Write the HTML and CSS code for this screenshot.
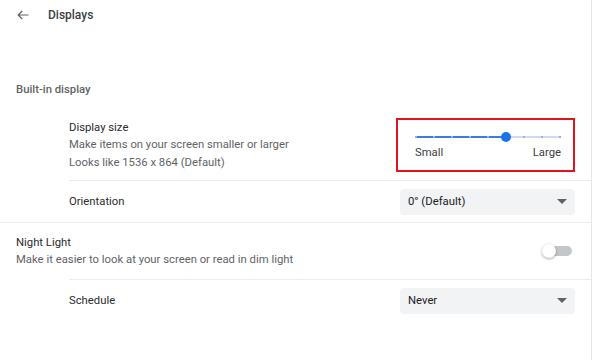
FILE: index.html
```html
<!DOCTYPE html>
<html>
<head>
<meta charset="utf-8">
<link rel="stylesheet" href="styles.css">
</head>
<body>
<div class="page">
  <header class="header">
    <svg class="back" width="12" height="10" viewBox="0 0 12 10"><path d="M11.5 5H1.2M5.2 1L1.2 5l4 4" fill="none" stroke="#5f6368" stroke-width="1.2"/></svg>
    <span class="title">Displays</span>
  </header>
  <div class="section-title">Built-in display</div>
  <div class="row row-size">
    <div class="text">
      <div class="label">Display size</div>
      <div class="sub">Make items on your screen smaller or larger</div>
      <div class="sub">Looks like 1536 x 864 (Default)</div>
    </div>
    <div class="slider-box">
      <div class="slider">
        <div class="track"></div>
        <div class="active" style="width:91px"></div>
        <div class="ticks">
          <i class="on"></i><i class="on"></i><i class="on"></i><i class="on"></i><i class="on"></i><i></i><i></i><i></i><i></i>
        </div>
        <div class="knob" style="left:91px"></div>
      </div>
      <div class="slider-labels"><span>Small</span><span>Large</span></div>
    </div>
  </div>
  <div class="row row-select indented">
    <div class="label">Orientation</div>
    <div class="select"><span>0° (Default)</span><svg width="10" height="5" viewBox="0 0 10 5"><path d="M0 0h10L5 5z" fill="#5f6368"/></svg></div>
  </div>
  <div class="row row-night">
    <div class="text">
      <div class="label">Night Light</div>
      <div class="sub">Make it easier to look at your screen or read in dim light</div>
    </div>
    <div class="toggle"><div class="toggle-track"></div><div class="toggle-knob"></div></div>
  </div>
  <div class="row row-select indented">
    <div class="label">Schedule</div>
    <div class="select"><span>Never</span><svg width="10" height="5" viewBox="0 0 10 5"><path d="M0 0h10L5 5z" fill="#5f6368"/></svg></div>
  </div>
</div>
</body>
</html>
```

FILE: styles.css
```css
html, body {
  margin: 0;
  padding: 0;
  background: #fff;
}
body {
  font-family: Roboto, "Liberation Sans", sans-serif;
  font-size: 11.3px;
  color: #202124;
}
.page {
  width: 592px;
  height: 360px;
  border-right: 1px solid #e6e6e6;
  box-sizing: border-box;
}
.header {
  height: 29px;
  display: flex;
  align-items: center;
  padding-left: 17px;
}
.back {
  display: block;
}
.title {
  margin-left: 19px;
  font-size: 12px;
  font-weight: 500;
  color: #3c4043;
}
.section-title {
  margin-top: 51px;
  height: 20px;
  line-height: 20px;
  padding-left: 16px;
  font-weight: 500;
  color: #5f6368;
}
.row {
  display: flex;
  align-items: center;
  justify-content: space-between;
  box-sizing: border-box;
  padding-right: 16px;
}
.row-size {
  margin-top: 10px;
  height: 70px;
  padding-left: 69px;
}
.text .label, .text .sub {
  line-height: 17.5px;
}
.label {
  color: #2a2b2e;
}
.sub {
  color: #5f6368;
}
.slider-box {
  width: 179px;
  height: 54px;
  box-sizing: border-box;
  border: 2px solid #e0141e;
  padding: 0 12px 0 17px;
}
.slider {
  position: relative;
  height: 10px;
  margin-top: 12px;
  width: 146px;
}
.track {
  position: absolute;
  left: 0;
  right: 0;
  top: 4px;
  height: 2px;
  background: #cddcf5;
}
.active {
  position: absolute;
  left: 0;
  top: 4px;
  height: 2px;
  background: #3b7ddd;
}
.ticks {
  position: absolute;
  left: 0;
  right: 0;
  top: 4px;
  height: 2px;
  display: flex;
  justify-content: space-between;
}
.ticks i {
  display: block;
  width: 2px;
  height: 2px;
  background: #9fb2d0;
}
.ticks i.on {
  background: #8fb3ec;
}
.knob {
  position: absolute;
  top: 0;
  width: 10px;
  height: 10px;
  margin-left: -5px;
  border-radius: 50%;
  background: #1a73e8;
}
.slider-labels {
  display: flex;
  justify-content: space-between;
  margin-top: 4px;
  color: #3c4043;
  width: 146px;
}
.row-select {
  height: 42px;
  margin-left: 69px;
  border-top: 1px solid #ececec;
}
.select {
  width: 175px;
  height: 26px;
  box-sizing: border-box;
  background: #f1f3f4;
  border-radius: 4px;
  display: flex;
  align-items: center;
  justify-content: space-between;
  padding: 0 8px 0 8px;
  color: #202124;
}
.row-night {
  height: 57px;
  padding-left: 16px;
  padding-right: 19px;
  border-top: 1px solid #ececec;
}
.toggle {
  position: relative;
  width: 30px;
  height: 14px;
}
.toggle-track {
  position: absolute;
  left: 4px;
  right: 0;
  top: 2px;
  height: 10px;
  border-radius: 5px;
  background: #c4c7ca;
}
.toggle-knob {
  position: absolute;
  left: 0;
  top: 0;
  width: 14px;
  height: 14px;
  border-radius: 50%;
  background: #fff;
  box-shadow: 0 1px 3px rgba(0,0,0,0.35);
}
```
